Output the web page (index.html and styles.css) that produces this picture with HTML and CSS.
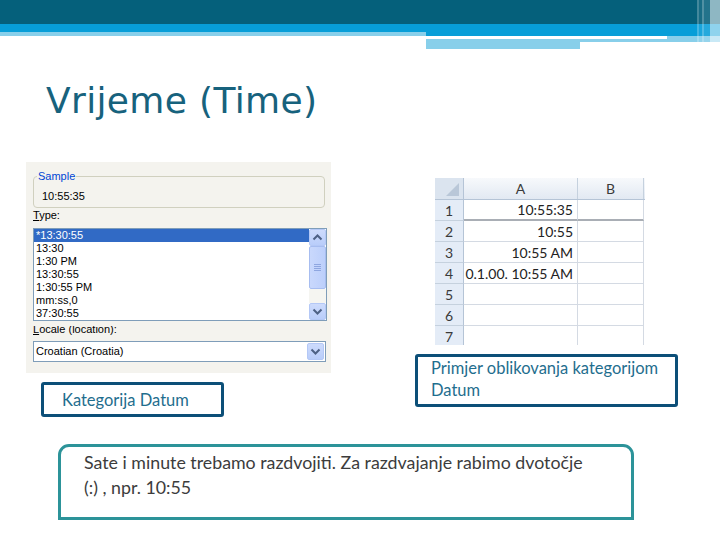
FILE: index.html
```html
<!DOCTYPE html>
<html>
<head>
<meta charset="utf-8">
<link rel="stylesheet" href="styles.css">
</head>
<body>
<header class="hdr">
  <div class="band dark"></div>
  <div class="band blue"></div>
  <div class="hrow r3"><span class="seg left light"></span><span class="seg fill blue"></span></div>
  <div class="hrow r4"><span class="seg left"></span><span class="seg w241"></span><span class="seg fill light"></span></div>
  <div class="hrow r5"><span class="seg left"></span><span class="seg fill light"></span></div>
  <div class="hrow r6"><span class="seg left"></span><span class="seg w154 light"></span><span class="seg fill"></span></div>
  <div class="stripes"><span class="st s1"></span><span class="st s2"></span><span class="st s3"></span><span class="st s4"></span><span class="st s5"></span></div>
</header>

<h1 class="title">Vrijeme (Time)</h1>

<main class="main">
  <section class="col-left">
    <div class="dialog">
      <fieldset class="group">
        <legend class="legend">Sample</legend>
        <div class="sample">10:55:35</div>
      </fieldset>
      <div class="lbl"><u>T</u>ype:</div>
      <div class="listbox">
        <ul class="items">
          <li class="sel">*13:30:55</li>
          <li>13:30</li>
          <li>1:30 PM</li>
          <li>13:30:55</li>
          <li>1:30:55 PM</li>
          <li>mm:ss,0</li>
          <li>37:30:55</li>
        </ul>
        <div class="sbar">
          <div class="sbtn"><svg width="15" height="15" viewBox="0 0 15 15"><polyline points="3.5,9.5 7.5,5.5 11.5,9.5" fill="none" stroke="#4d6185" stroke-width="2"/></svg></div>
          <div class="thumb"><span class="grip"></span><span class="grip"></span><span class="grip"></span><span class="grip"></span></div>
          <div class="track"></div>
          <div class="sbtn"><svg width="15" height="15" viewBox="0 0 15 15"><polyline points="3.5,5.5 7.5,9.5 11.5,5.5" fill="none" stroke="#4d6185" stroke-width="2"/></svg></div>
        </div>
      </div>
      <div class="lbl-clip"><span><u>L</u>ocale (location):</span></div>
      <div class="combo">
        <span class="combo-text">Croatian (Croatia)</span>
        <div class="sbtn cbtn"><svg width="15" height="15" viewBox="0 0 15 15"><polyline points="3.5,5.5 7.5,9.5 11.5,5.5" fill="none" stroke="#4d6185" stroke-width="2"/></svg></div>
      </div>
    </div>
    <div class="caption cap-left">Kategorija Datum</div>
  </section>

  <section class="col-right">
    <div class="excel">
      <div class="xrow xhead">
        <div class="corner"><svg width="28" height="21" viewBox="0 0 28 21"><polygon points="24,5 24,18 11,18" fill="#b9c7d8"/></svg></div>
        <div class="ch ca">A</div>
        <div class="ch cb">B</div>
      </div>
      <div class="xrow r-first"><div class="rh">1</div><div class="cell ca">10:55:35</div><div class="cell cb"></div></div>
      <div class="xrow"><div class="rh">2</div><div class="cell ca">10:55</div><div class="cell cb"></div></div>
      <div class="xrow"><div class="rh">3</div><div class="cell ca">10:55 AM</div><div class="cell cb"></div></div>
      <div class="xrow"><div class="rh">4</div><div class="cell ca">0.1.00. 10:55 AM</div><div class="cell cb"></div></div>
      <div class="xrow"><div class="rh">5</div><div class="cell ca"></div><div class="cell cb"></div></div>
      <div class="xrow"><div class="rh">6</div><div class="cell ca"></div><div class="cell cb"></div></div>
      <div class="xrow"><div class="rh">7</div><div class="cell ca"></div><div class="cell cb"></div></div>
    </div>
    <div class="caption cap-right">Primjer oblikovanja kategorijom Datum</div>
  </section>
</main>

<div class="note">Sate i minute trebamo razdvojiti. Za razdvajanje rabimo dvotočje<br>(:) , npr. 10:55</div>
</body>
</html>
```

FILE: styles.css
```css
body {
  margin: 0;
  width: 720px;
  height: 540px;
  overflow: hidden;
  background: #ffffff;
  font-family: Lato, "Liberation Sans", sans-serif;
}

/* header bands */
.hdr {
  position: relative;
  height: 49px;
}
.band { height: 24px; }
.band.dark { background: #05607b; }
.band.blue { height: 8px; background: #079ed8; }
.hrow { display: flex; }
.seg { display: block; height: 100%; }
.seg.left { width: 426px; }
.seg.fill { flex: 1; }
.seg.w241 { width: 241px; }
.seg.w154 { width: 154px; }
.r3 { height: 4px; }
.r4 { height: 3px; }
.r5 { height: 3px; }
.r6 { height: 7px; }
.light { background: #88cfea; }
.blue { background: #079ed8; }

.stripes {
  position: absolute;
  top: 0;
  right: 0;
  height: 48px;
  width: 23px;
  display: flex;
}
.st { display: block; height: 100%; }
.s1 { width: 2px; background: rgba(255,255,255,0.25); }
.s2 { width: 3px; background: rgba(255,255,255,0.08); }
.s3 { width: 2px; background: rgba(255,255,255,0.3); }
.s4 { width: 6px; background: rgba(255,255,255,0.12); }
.s5 { width: 10px; background: rgba(255,255,255,0.55); }

/* title */
.title {
  margin: 0;
  height: 113px;
  box-sizing: border-box;
  padding: 30px 0 0 46px;
  font: normal 36px/44px "DejaVu Sans", sans-serif;
  letter-spacing: 0.35px;
  color: #17627d;
}

/* main content */
.main {
  display: flex;
  align-items: flex-start;
}
.col-left {
  margin-left: 26px;
  width: 305px;
}
.col-right {
  margin-left: 84px;
  width: 263px;
}

/* dialog */
.dialog {
  height: 211px;
  box-sizing: border-box;
  background: #f4f3ee;
  padding: 8px 0 0 7px;
  font: 11px/13px "Liberation Sans", sans-serif;
  color: #000;
}
.group {
  margin: 0;
  width: 292px;
  height: 38px;
  box-sizing: border-box;
  border: 1px solid #d0d0bf;
  border-radius: 4px;
  padding: 0 0 0 8px;
}
.legend {
  padding: 0 1px;
  margin-left: -5px;
  color: #0046d5;
  line-height: 13px;
}
.sample { padding-top: 7px; }
.lbl { margin-top: 1px; }
.listbox {
  margin-top: 6px;
  width: 294px;
  height: 93px;
  box-sizing: border-box;
  border: 1px solid #7f9db9;
  background: #fff;
  display: flex;
}
.items {
  list-style: none;
  margin: 0;
  padding: 0;
  flex: 1;
}
.items li {
  height: 13px;
  padding-left: 2px;
}
.items li.sel {
  background: #316ac5;
  color: #fff;
}
.sbar {
  width: 17px;
  display: flex;
  flex-direction: column;
}
.sbtn {
  width: 17px;
  height: 17px;
  box-sizing: border-box;
  border: 1px solid #b4c8f6;
  border-radius: 2px;
  background: linear-gradient(#cddbfc, #b9cdfa);
  display: flex;
  align-items: center;
  justify-content: center;
}
.thumb {
  height: 43px;
  box-sizing: border-box;
  border: 1px solid #a7bdf0;
  border-radius: 2px;
  background: linear-gradient(90deg, #c9d8fc, #bccffb);
  display: flex;
  flex-direction: column;
  align-items: center;
  justify-content: center;
  gap: 1px;
}
.grip {
  display: block;
  width: 7px;
  height: 1px;
  background: #8ea6e0;
}
.track {
  flex: 1;
  background: #f5f5f1;
}
.lbl-clip {
  margin-top: 5px;
  height: 11px;
  overflow: hidden;
}
.lbl-clip span {
  display: block;
  margin-top: -3px;
}
.combo {
  margin-top: 4px;
  width: 293px;
  height: 21px;
  box-sizing: border-box;
  border: 1px solid #7f9db9;
  background: #fff;
  display: flex;
  align-items: center;
  padding: 0 1px 0 2px;
}
.combo-text {
  flex: 1;
  line-height: 19px;
}

/* captions */
.caption {
  box-sizing: border-box;
  border: 3px solid #0c4f78;
  border-radius: 3px;
  color: #1f6e8e;
  font-size: 16.5px;
}
.cap-left {
  margin: 9px 0 0 15px;
  width: 183px;
  height: 35px;
  padding-left: 18px;
  display: flex;
  align-items: center;
}
.cap-right {
  margin-top: 9px;
  width: 263px;
  height: 53px;
  padding: 0 6px 0 13px;
  line-height: 22px;
}

/* excel */
.excel {
  margin: 16px 0 0 20px;
  width: 210px;
  height: 167px;
  overflow: hidden;
  font: 14px Lato, sans-serif;
  color: #222;
}
.xrow {
  display: flex;
  height: 21px;
}
.xhead {
  height: 22px;
  background: linear-gradient(#f7f9fc, #e2e9f2);
  border-bottom: 1px solid #b5c4d6;
  box-sizing: border-box;
}
.corner {
  width: 28px;
  background: #dbe4ef;
  border-right: 1px solid #b5c4d6;
}
.ch {
  display: flex;
  align-items: center;
  justify-content: center;
  color: #3a3a3a;
  border-right: 1px solid #c5d1de;
  box-sizing: border-box;
}
.ca { width: 114px; }
.cb { width: 66px; }
.rh {
  width: 28px;
  border-right: 1px solid #b5c4d6;
  border-bottom: 1px solid #c5d1de;
  background: #e4ecf7;
  color: #3a3a3a;
  display: flex;
  align-items: center;
  justify-content: center;
}
.cell {
  box-sizing: border-box;
  border-right: 1px solid #d4dae3;
  border-bottom: 1px solid #d4dae3;
  display: flex;
  align-items: center;
  justify-content: flex-end;
  padding-right: 4px;
}
.r-first .cell {
  border-bottom: 2px solid #a9aeb5;
}

/* note */
.note {
  margin: 27px 0 0 58px;
  width: 576px;
  height: 76px;
  box-sizing: border-box;
  border: 3px solid #2c9399;
  border-radius: 11px 11px 0 0;
  padding: 3px 0 0 23px;
  font-size: 17.8px;
  line-height: 25px;
  color: #3c3c3c;
}
```
